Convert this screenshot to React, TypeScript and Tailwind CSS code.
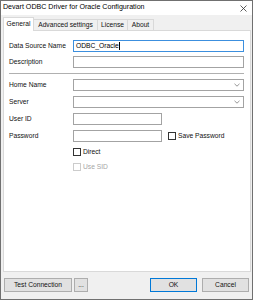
import React from "react";

function Chevron() {
  return (
    <svg width="6" height="4" viewBox="0 0 6 4" className="mr-[3px]">
      <path d="M0.5 0.8 L3 3.2 L5.5 0.8" fill="none" stroke="#8a8a8a" strokeWidth="0.9" />
    </svg>
  );
}

function Input({ w, focused, children, combo }: { w?: string; focused?: boolean; children?: React.ReactNode; combo?: boolean }) {
  return (
    <div
      className={
        "h-[12px] bg-white border flex items-center justify-between " +
        (focused ? "border-[#3c8fde] " : "border-[#a3a3a3] ") +
        (w ?? "flex-1")
      }
    >
      <div className="flex items-center pl-[2px] leading-none">{children}</div>
      {combo ? <Chevron /> : null}
    </div>
  );
}

function CheckBox({ disabled }: { disabled?: boolean }) {
  return (
    <div
      className={
        "w-[8px] h-[8px] shrink-0 bg-white border " + (disabled ? "border-[#cccccc]" : "border-[#333333]")
      }
    />
  );
}

function Row({ label, children, mt }: { label: string; children: React.ReactNode; mt: string }) {
  return (
    <div className={"flex items-center " + mt}>
      <div className="w-[64px] shrink-0 leading-none">{label}</div>
      {children}
    </div>
  );
}

export default function App() {
  return (
    <div
      className="w-[253px] h-[300px] bg-[#f0f0f0] border border-[#707070] flex flex-col text-[6.7px] text-[#111111] overflow-hidden whitespace-nowrap"
      style={{ fontFamily: "'Liberation Sans', Arial, sans-serif" }}
    >
      {/* Title bar */}
      <div className="h-[14px] bg-white flex items-center justify-between pl-[2px] pr-[5px] shrink-0">
        <span className="text-[7.1px] leading-none text-black">Devart ODBC Driver for Oracle Configuration</span>
        <svg width="7" height="7" viewBox="0 0 7 7">
          <path d="M0.5 0.5 L6.5 6.5 M6.5 0.5 L0.5 6.5" stroke="#333" strokeWidth="0.8" fill="none" />
        </svg>
      </div>

      {/* Tabs */}
      <div className="h-[15px] flex items-end pl-[2px] shrink-0 relative z-10">
        <div className="h-[14px] w-[31px] bg-white border border-b-0 border-[#d9d9d9] flex items-center justify-center -mb-px pb-[1px] leading-none">
          General
        </div>
        <div className="h-[11px] w-[64px] border border-b-0 border-l-0 border-[#d9d9d9] flex items-center justify-center leading-none">
          Advanced settings
        </div>
        <div className="h-[11px] w-[30px] border border-b-0 border-l-0 border-[#d9d9d9] flex items-center justify-center leading-none">
          License
        </div>
        <div className="h-[11px] w-[26px] border border-b-0 border-l-0 border-[#d9d9d9] flex items-center justify-center leading-none">
          About
        </div>
      </div>

      {/* Panel */}
      <div className="ml-[2px] mr-[1px] h-[242px] shrink-0 bg-white border border-[#d9d9d9] pl-[5px] pr-[6px] pt-[9px] flex flex-col">
        <Row label="Data Source Name" mt="">
          <Input focused>
            <span className="text-black">ODBC_Oracle</span>
            <span className="w-px h-[8px] bg-black ml-[0.5px]" />
          </Input>
        </Row>
        <Row label="Description" mt="mt-[4px]">
          <Input />
        </Row>
        <div className="h-px bg-[#b0b0b0] mt-[5px]" />
        <Row label="Home Name" mt="mt-[5px]">
          <Input combo />
        </Row>
        <Row label="Server" mt="mt-[5px]">
          <Input combo />
        </Row>
        <Row label="User ID" mt="mt-[5px]">
          <Input w="w-[89px]" />
        </Row>
        <Row label="Password" mt="mt-[5px]">
          <Input w="w-[89px]" />
          <div className="ml-[6px]">
            <CheckBox />
          </div>
          <span className="ml-[2px] leading-none">Save Password</span>
        </Row>
        <div className="flex items-center mt-[6px] pl-[64px]">
          <CheckBox />
          <span className="ml-[2px] leading-none">Direct</span>
        </div>
        <div className="flex items-center mt-[7px] pl-[64px]">
          <CheckBox disabled />
          <span className="ml-[2px] leading-none text-[#a6a6a6]">Use SID</span>
        </div>
      </div>

      {/* Bottom buttons */}
      <div className="flex items-start pt-[6px] pl-[3px] pr-[3px]">
        <div className="h-[14px] w-[68px] bg-[#e1e1e1] border border-[#adadad] flex items-center justify-center leading-none">
          Test Connection
        </div>
        <div className="h-[14px] w-[14px] ml-[2px] bg-[#e1e1e1] border border-[#adadad] flex items-center justify-center leading-none">
          ...
        </div>
        <div className="flex-1" />
        <div className="h-[14px] w-[47px] bg-[#e1e1e1] border border-[#0078d7] flex items-center justify-center leading-none">
          OK
        </div>
        <div className="h-[14px] w-[47px] ml-[5px] bg-[#e1e1e1] border border-[#adadad] flex items-center justify-center leading-none">
          Cancel
        </div>
      </div>
    </div>
  );
}
